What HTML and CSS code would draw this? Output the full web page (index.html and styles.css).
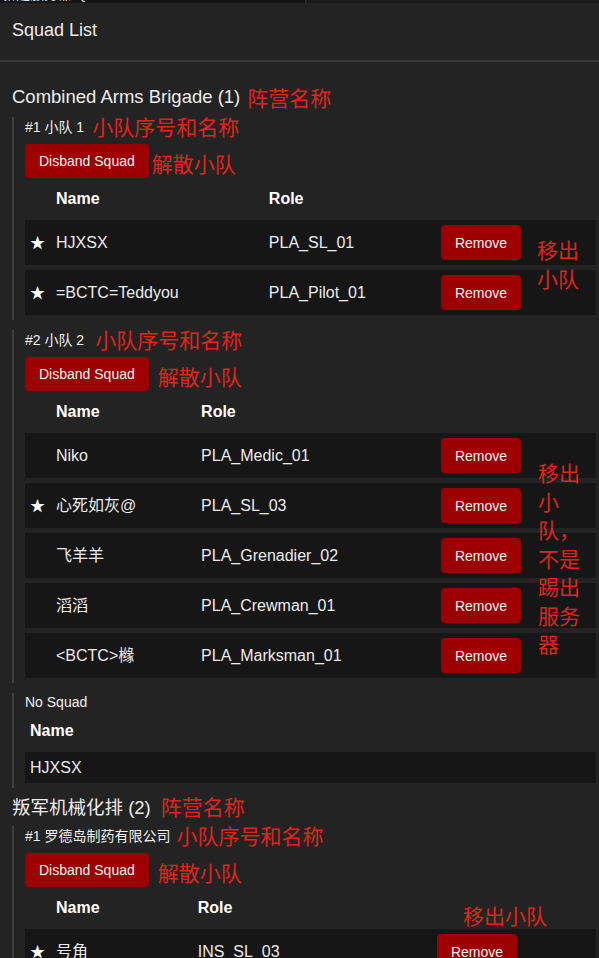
FILE: index.html
```html
<html>
<head>
	<meta charset="utf-8">
	<link rel="stylesheet" href="styles.css">
</head>
<body>
	<div class="topstrip"><div class="tab"><span>新建服务器 Q10001033 RCON0700</span></div></div>
	<div class="panel">
		<div class="panel-head">Squad List</div>
		<div class="panel-body">

			<!-- 阵营 1 -->
			<h3 class="faction-name">Combined Arms Brigade (1)<span class="note n-faction">阵营名称</span></h3>

			<div class="squad">
				<div class="squad-title">#1 小队 1<span class="note n-title">小队序号和名称</span></div>
				<div class="squad-actions"><button class="btn">Disband Squad</button><span class="note n-btn">解散小队</span></div>
				<table class="members">
					<thead>
						<tr><th class="c-star"></th><th>Name</th><th>Role</th><th class="c-act"></th></tr>
					</thead>
					<tbody>
						<tr><td class="c-star">★</td><td>HJXSX</td><td>PLA_SL_01</td><td><button class="btn btn-sm">Remove</button></td></tr>
						<tr><td class="c-star">★</td><td>=BCTC=Teddyou</td><td>PLA_Pilot_01</td><td><button class="btn btn-sm">Remove</button></td></tr>
					</tbody>
				</table>
				<span class="note side side1">移出<br>小队</span>
			</div>

			<div class="squad">
				<div class="squad-title">#2 小队 2<span class="note n-title2">小队序号和名称</span></div>
				<div class="squad-actions"><button class="btn">Disband Squad</button><span class="note n-btn2">解散小队</span></div>
				<table class="members">
					<thead>
						<tr><th class="c-star"></th><th>Name</th><th>Role</th><th class="c-act"></th></tr>
					</thead>
					<tbody>
						<tr><td class="c-star"></td><td>Niko</td><td>PLA_Medic_01</td><td><button class="btn btn-sm">Remove</button></td></tr>
						<tr><td class="c-star">★</td><td>心死如灰@</td><td>PLA_SL_03</td><td><button class="btn btn-sm">Remove</button></td></tr>
						<tr><td class="c-star"></td><td>飞羊羊</td><td>PLA_Grenadier_02</td><td><button class="btn btn-sm">Remove</button></td></tr>
						<tr><td class="c-star"></td><td>滔滔</td><td>PLA_Crewman_01</td><td><button class="btn btn-sm">Remove</button></td></tr>
						<tr><td class="c-star"></td><td>&lt;BCTC&gt;橼</td><td>PLA_Marksman_01</td><td><button class="btn btn-sm">Remove</button></td></tr>
					</tbody>
				</table>
				<span class="note side side2">移出<br>小<br>队，<br>不是<br>踢出<br>服务<br>器</span>
			</div>

			<div class="squad squad-free">
				<div class="squad-title">No Squad</div>
				<table class="members nosquad">
					<thead>
						<tr><th>Name</th></tr>
					</thead>
					<tbody>
						<tr><td>HJXSX</td></tr>
					</tbody>
				</table>
			</div>

			<!-- 阵营 2 -->
			<h3 class="faction-name">叛军机械化排 (2)<span class="note n-faction2">阵营名称</span></h3>

			<div class="squad">
				<div class="squad-title">#1 罗德岛制药有限公司<span class="note n-title3">小队序号和名称</span></div>
				<div class="squad-actions"><button class="btn">Disband Squad</button><span class="note n-btn2">解散小队</span></div>
				<table class="members">
					<thead>
						<tr><th class="c-star"></th><th>Name</th><th>Role</th><th class="c-act wide"></th></tr>
					</thead>
					<tbody>
						<tr><td class="c-star">★</td><td>号角</td><td>INS_SL_03</td><td><button class="btn btn-sm">Remove</button></td></tr>
					</tbody>
				</table>
				<span class="note side3">移出小队</span>
			</div>

		</div>
	</div>
</body>
</html>
```

FILE: styles.css
```css
html,body{margin:0;padding:0;}
body{background:#232323;color:#ececec;font-family:"Liberation Sans",Arial,"Noto Sans CJK SC",sans-serif;font-size:14px;overflow:hidden;}

.topstrip{height:3px;background:#1c1c1c;overflow:hidden;}
.topstrip .tab{width:305px;height:3px;background:#141414;overflow:hidden;border-right:1px solid #2e2e2e;}
.topstrip span{display:block;margin-top:-13px;line-height:14px;font-size:14px;color:#ddd;white-space:nowrap;padding-left:2px;}

.panel-head{font-size:18px;line-height:20px;padding:17px 12px 20px;border-bottom:2px solid #383838;color:#ececec;}
.panel-body{padding:24px 3px 0 12px;}

.faction-name{display:flex;align-items:center;height:22px;margin:0 0 9px;font-size:18.5px;font-weight:normal;color:#ececec;}

.squad{position:relative;border-left:2px solid #3e3e3e;padding-left:11px;margin-bottom:10px;}
.squad-free{margin-bottom:7px;}
.squad-title{display:flex;align-items:center;height:17px;font-size:14px;color:#f0f0f0;}
.squad-actions{margin-top:10px;height:34px;display:flex;align-items:center;}

.btn{background:#9c0000;color:#f2f2f2;border:none;border-radius:4px;font-family:"Liberation Sans",Arial,sans-serif;font-size:14px;height:34px;padding:0 14px;}
.btn-sm{width:80px;height:35px;padding:0;display:block;}

.members{width:100%;border-collapse:separate;border-spacing:0 5px;}
.members th{text-align:left;font-weight:bold;color:#fff;padding:8px 6px;line-height:16px;}
.members td{background:#161616;padding:5px 6px;line-height:18px;color:#ececec;}
.members .c-star{width:16px;padding-left:5px;padding-right:4px;color:#fff;font-size:15px;}
.members .c-act{width:149px;}
.members .c-act.wide{width:153px;}

.nosquad th{padding:7px 5px;line-height:18px;}
.nosquad td{padding:6px 5px;line-height:19px;}

.note{font-family:"Noto Sans CJK SC",sans-serif;color:#e0241c;font-size:21px;line-height:22px;font-weight:normal;}
.n-faction{margin-left:7px;}
.n-faction2{margin-left:10px;}
.n-title{margin-left:8px;}
.n-title2{margin-left:11px;}
.n-title3{margin-left:6px;}
.n-btn{margin-left:3px;margin-top:4px;}
.n-btn2{margin-left:9px;margin-top:4px;}

.side{position:absolute;width:46px;line-height:28.5px;}
.side1{left:523px;top:118px;}
.side2{left:524px;top:128px;}
.side3{position:absolute;left:449px;top:75px;line-height:29px;}
```
